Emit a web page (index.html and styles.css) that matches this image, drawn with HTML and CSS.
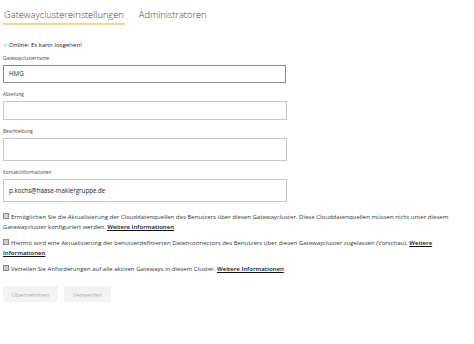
FILE: index.html
```html
<!DOCTYPE html>
<html lang="de">
<head>
<meta charset="utf-8">
<link rel="stylesheet" href="styles.css">
</head>
<body>
<div class="page">
  <nav class="tabs">
    <span class="tab active">Gatewayclustereinstellungen</span>
    <span class="tab">Administratoren</span>
  </nav>
  <div class="status"><span class="check">✓</span>Online: Es kann losgehen!</div>
  <div class="field first">
    <label class="lbl">Gatewayclustername</label>
    <div class="input focus">HMG</div>
  </div>
  <div class="field">
    <label class="lbl">Abteilung</label>
    <div class="input"></div>
  </div>
  <div class="field">
    <label class="lbl">Beschreibung</label>
    <div class="input tall"></div>
  </div>
  <div class="field">
    <label class="lbl">Kontaktinformationen</label>
    <div class="input tall">p.kochs@haase-maklergruppe.de</div>
  </div>
  <div class="opts">
    <p class="opt"><span class="cb"></span>Ermöglichen Sie die Aktualisierung der Clouddatenquellen des Benutzers über diesen Gatewaycluster. Diese Clouddatenquellen müssen nicht unter diesem Gatewaycluster konfiguriert werden. <a>Weitere Informationen</a></p>
    <p class="opt"><span class="cb"></span>Hiermit wird eine Aktualisierung der benutzerdefinierten Datenconnectors des Benutzers über diesen Gatewaycluster zugelassen (Vorschau). <a>Weitere Informationen</a></p>
    <p class="opt"><span class="cb"></span>Verteilen Sie Anforderungen auf alle aktiven Gateways in diesem Cluster. <a>Weitere Informationen</a></p>
  </div>
  <div class="buttons">
    <button class="btn b1">Übernehmen</button>
    <button class="btn b2">Verwerfen</button>
  </div>
</div>
</body>
</html>
```
FILE: styles.css
```css
html, body { margin: 0; padding: 0; background: #fff; }
body { font-family: "Open Sans", "Noto Sans", sans-serif; color: #333; }
.page { padding: 0 3px; width: 464px; }
.tabs { display: flex; gap: 13px; padding-top: 7px; }
.tab { font-size: 9.3px; font-weight: 300; color: #444; padding: 0 1px 1px; line-height: 15px; }
.tab.active { border-bottom: 2px solid #e8dc86; }
.status { font-size: 6.1px; color: #222; margin-top: 15px; line-height: 9px; }
.check { color: #8cb08c; margin-right: 1px; }
.field { margin-top: 8px; }
.field.first { margin-top: 6px; }
.lbl { display: block; font-size: 4.7px; color: #444; line-height: 7px; }
.input { margin-top: 3px; height: 17px; border: 1px solid #c8c8c8; font-size: 6.2px; line-height: 17px; padding-left: 5px; width: 277px; color: #222; }
.input.focus { border: 1.5px solid #8a8a8a; height: 16px; line-height: 16px; width: 276px; }
.input.tall { height: 21px; line-height: 21px; }
.opts { margin-top: 10px; }
.opt { margin: 0 0 6px; font-size: 6.05px; line-height: 10px; color: #333; }
.opt a { color: #111; text-decoration: underline; font-weight: 600; }
.cb { display: inline-block; width: 4px; height: 4px; border: 1px solid #888; background: #cfcfcf; margin-right: 2px; vertical-align: -0.3px; }
.buttons { display: flex; gap: 6px; margin-top: 12px; }
.btn { font-family: inherit; font-size: 6.1px; color: #b0b0b0; background: #f3f3f3; border: none; height: 16px; padding: 0; }
.b1 { width: 55px; }
.b2 { width: 47px; }
```
